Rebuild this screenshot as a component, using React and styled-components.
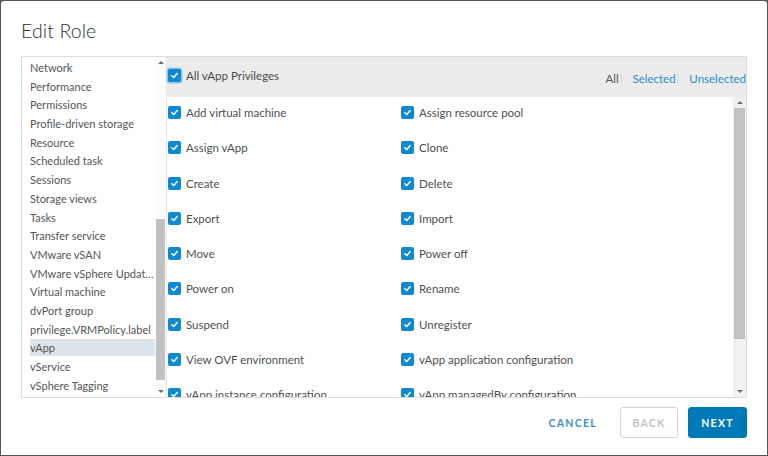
import React from 'react';
import styled, { createGlobalStyle } from 'styled-components';

const GlobalStyle = createGlobalStyle`
  html, body {
    margin: 0;
    padding: 0;
    background: #565656;
  }
  body {
    padding: 1px 1px 1px 1px;
    font-family: Lato, "Open Sans", Arial, sans-serif;
  }
`;

const Dialog = styled.div`
  width: 766px;
  height: 454px;
  background: #fff;
  border-radius: 3px 3px 0 0;
  box-sizing: border-box;
  padding: 0 20px 0 20px;
  display: flex;
  flex-direction: column;
`;

const Title = styled.h1`
  margin: 0;
  height: 55px;
  font-size: 19.5px;
  font-weight: 300;
  color: #313131;
  line-height: 1;
  padding-top: 20px;
  box-sizing: border-box;
  letter-spacing: 0.1px;
`;

const Panel = styled.div`
  height: 342px;
  border: 1px solid #dcdcdc;
  display: flex;
  box-sizing: border-box;
`;

const LeftPane = styled.div`
  width: 144px;
  display: flex;
  border-right: 1px solid #e6e6e6;
`;

const List = styled.ul`
  list-style: none;
  margin: 0;
  padding: 2px 0 0 8px;
  flex: 1;
  overflow: hidden;
`;

const ListItem = styled.li`
  height: 17px;
  margin-bottom: 1.7px;
  line-height: 17px;
  font-size: 11px;
  color: #565656;
  white-space: nowrap;
  overflow: hidden;
  text-overflow: ellipsis;
  background: ${p => (p.$active ? '#dbe4ea' : 'transparent')};
`;

const ScrollBar = styled.div`
  width: ${p => p.$w || 11}px;
  background: ${p => p.$track || '#fafafa'};
  display: flex;
  flex-direction: column;
  align-items: center;
  padding: 0 1px;
  box-sizing: border-box;
`;

const Arrow = styled.div`
  width: 0;
  height: 0;
  margin: 4px 0;
  border-left: 3px solid transparent;
  border-right: 3px solid transparent;
  ${p => (p.$down ? 'border-top: 3px solid #707070;' : 'border-bottom: 3px solid #707070;')}
`;

const Track = styled.div`
  flex: 1;
  width: 100%;
  display: flex;
  flex-direction: column;
`;

const Thumb = styled.div`
  width: 100%;
  background: #c1c1c1;
`;

const RightPane = styled.div`
  flex: 1;
  display: flex;
  flex-direction: column;
  min-width: 0;
`;

const Header = styled.div`
  height: 40px;
  background: #ececec;
  display: flex;
  align-items: flex-start;
  justify-content: space-between;
  padding: 0 0 0 1px;
  box-sizing: border-box;
`;

const HeaderCheck = styled.label`
  display: flex;
  align-items: center;
  gap: 5px;
  margin-top: 12px;
  font-size: 11.5px;
  color: #4a4a4a;
`;

const Filters = styled.div`
  display: flex;
  align-items: center;
  margin-top: 15px;
  font-size: 11.5px;
`;

const Filter = styled.span`
  color: ${p => (p.$active ? '#565656' : '#2d8bc9')};
  margin-left: ${p => (p.$first ? 0 : 10)}px;
`;

const Sep = styled.span`
  color: #b5b5b5;
  margin-left: 1px;
  font-weight: 300;
`;

const Body = styled.div`
  flex: 1;
  display: flex;
  min-height: 0;
`;

const Grid = styled.div`
  flex: 1;
  display: grid;
  grid-template-columns: 233px 1fr;
  grid-auto-rows: 35.3px;
  padding: 9px 0 0 1px;
  overflow: hidden;
`;

const Item = styled.label`
  display: flex;
  align-items: flex-start;
  gap: 5px;
  font-size: 11.5px;
  color: #4f4f4f;
  line-height: 13px;
  white-space: nowrap;
`;

const Box = styled.span`
  width: 13px;
  height: 13px;
  flex: none;
  border-radius: 2px;
  background: #0f89d0;
  display: flex;
  align-items: center;
  justify-content: center;
  box-shadow: ${p => (p.$focus ? '0 0 0 1.5px #8cc4ea' : 'none')};
`;

const Footer = styled.div`
  display: flex;
  justify-content: flex-end;
  align-items: center;
  gap: 10px;
  padding-top: 9px;
`;

const Button = styled.button`
  height: 31px;
  width: ${p => (p.$w ? `${p.$w}px` : 'auto')};
  padding: 0 ${p => (p.$w ? 0 : 12)}px;
  box-sizing: border-box;
  font-family: Lato, "Open Sans", Arial, sans-serif;
  font-size: 10.5px;
  font-weight: 700;
  letter-spacing: 1.3px;
  border-radius: 3px;
  cursor: pointer;
  border: 1px solid ${p => (p.$variant === 'primary' ? '#0079b8' : p.$variant === 'disabled' ? '#d4d4d4' : 'transparent')};
  background: ${p => (p.$variant === 'primary' ? '#0079b8' : '#fff')};
  color: ${p => (p.$variant === 'primary' ? '#fff' : p.$variant === 'disabled' ? '#c3c3c3' : '#3f8fc4')};
`;

const Check = ({ focus }) => (
  <Box $focus={focus}>
    <svg width="9" height="9" viewBox="0 0 10 10">
      <path d="M2 5.2 L4.2 7.3 L8 2.8" fill="none" stroke="#fff" strokeWidth="1.6" strokeLinecap="round" strokeLinejoin="round" />
    </svg>
  </Box>
);

const categories = [
  'Network', 'Performance', 'Permissions', 'Profile-driven storage', 'Resource',
  'Scheduled task', 'Sessions', 'Storage views', 'Tasks', 'Transfer service',
  'VMware vSAN', 'VMware vSphere Update Manager', 'Virtual machine', 'dvPort group',
  'privilege.VRMPolicy.label', 'vApp', 'vService', 'vSphere Tagging',
];

const privileges = [
  'Add virtual machine', 'Assign resource pool',
  'Assign vApp', 'Clone',
  'Create', 'Delete',
  'Export', 'Import',
  'Move', 'Power off',
  'Power on', 'Rename',
  'Suspend', 'Unregister',
  'View OVF environment', 'vApp application configuration',
  'vApp instance configuration', 'vApp managedBy configuration',
];

const App = () => (
  <>
    <GlobalStyle />
    <Dialog>
      <Title>Edit Role</Title>
      <Panel>
        <LeftPane>
          <List>
            {categories.map(c => (
              <ListItem key={c} $active={c === 'vApp'}>{c}</ListItem>
            ))}
          </List>
          <ScrollBar $track="#fcfcfc">
            <Arrow />
            <Track>
              <div style={{ height: 151 }} />
              <Thumb style={{ height: 161 }} />
            </Track>
            <Arrow $down />
          </ScrollBar>
        </LeftPane>
        <RightPane>
          <Header>
            <HeaderCheck>
              <Check focus />
              All vApp Privileges
            </HeaderCheck>
            <Filters>
              <Filter $active $first>All</Filter><Sep>|</Sep>
              <Filter>Selected</Filter><Sep>|</Sep>
              <Filter>Unselected</Filter>
            </Filters>
          </Header>
          <Body>
            <Grid>
              {privileges.map(p => (
                <Item key={p}>
                  <Check />
                  {p}
                </Item>
              ))}
            </Grid>
            <ScrollBar $w={13} $track="#f1f1f1">
              <Arrow />
              <Track>
                <Thumb style={{ height: 231 }} />
              </Track>
              <Arrow $down />
            </ScrollBar>
          </Body>
        </RightPane>
      </Panel>
      <Footer>
        <Button>CANCEL</Button>
        <Button $variant="disabled" $w={58}>BACK</Button>
        <Button $variant="primary" $w={59}>NEXT</Button>
      </Footer>
    </Dialog>
  </>
);

export default App;
